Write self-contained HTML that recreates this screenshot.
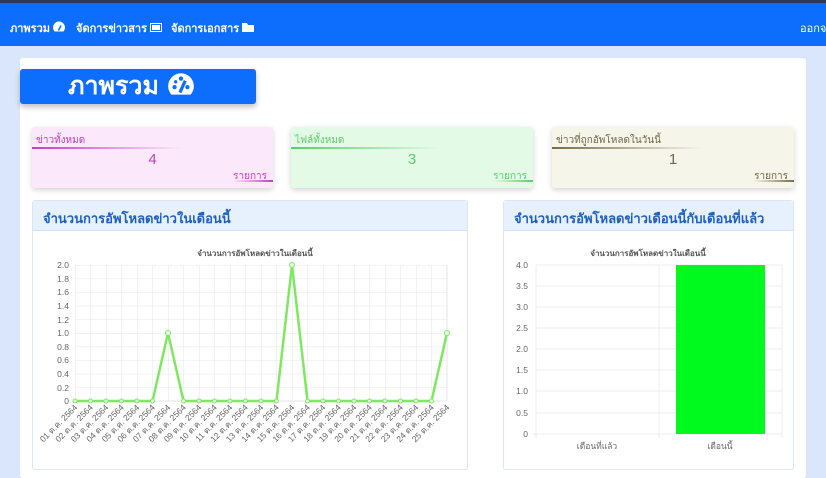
<!DOCTYPE html>
<html><head><meta charset="utf-8"><style>
*{margin:0;padding:0;box-sizing:border-box}
body{width:826px;height:465px;overflow:hidden;background:#dae6fb;font-family:"Liberation Sans","Noto Sans CJK SC",sans-serif;position:relative}
.a{position:absolute}
.nav{left:0;top:0;width:826px;height:46px;background:#0d6efd;border-top:3px solid #2b3a55}
.nav span{position:absolute;top:16px;color:#fff;font-size:11px;font-weight:bold;white-space:nowrap}
.card{border-radius:3px;box-shadow:0 2px 6px rgba(0,0,0,.18)}
.lbl{font-size:10px;position:absolute;left:4px;top:6px}
.ul{position:absolute;left:0;top:20px;height:2px;width:150px}
.num{position:absolute;width:100%;text-align:center;top:24px;font-size:15px}
.unit{position:absolute;right:6px;top:42px;font-size:10px}
.bl{position:absolute;right:0;top:53px;height:2px;width:40px}
.ph{background:#e7f0fd;border-bottom:1px solid #d6e2f3;border-radius:3px 3px 0 0;height:30px;color:#1f5fbf;font-size:13px;font-weight:bold;padding:7px 10px;white-space:nowrap}
</style></head><body>
<div class="a nav">
<span style="left:10px">ภาพรวม <svg width="12" height="11" viewBox="4 0 24 22"><path d="M7 21A12 12 0 1 1 25 21Z" fill="#fff"/><path d="M15 19L20 9" stroke="#0d6efd" stroke-width="3"/></svg></span>
<span style="left:76px">จัดการข่าวสาร <svg width="12" height="9"><rect x="0.5" y="0.5" width="11" height="8" fill="none" stroke="#fff"/><rect x="2" y="2" width="8" height="5" fill="#fff"/></svg></span>
<span style="left:171px">จัดการเอกสาร <svg width="13" height="9"><path d="M0 0H5L6 2H12V9H0Z" fill="#fff"/></svg></span>
<span style="left:800px;font-weight:normal">ออกจ</span>
</div>
<div class="a" style="left:20px;top:58px;width:786px;height:420px;background:#fff;border-radius:3px"></div>
<div class="a" style="left:20px;top:69px;width:236px;height:35px;background:#0d6efd;border-radius:3px;box-shadow:0 3px 6px rgba(0,0,0,.25);color:#fff;font-size:25px;font-weight:bold;padding-left:48px;line-height:35px">ภาพรวม <svg width="30" height="26" viewBox="2 0 28 24" style="vertical-align:-4px"><path d="M7 21A12 12 0 1 1 25 21Z" fill="#fff"/><circle cx="10" cy="14" r="2" fill="#0d6efd"/><circle cx="16" cy="6" r="2" fill="#0d6efd"/><circle cx="22" cy="14" r="2" fill="#0d6efd"/><circle cx="11" cy="9" r="1.6" fill="#0d6efd"/><path d="M15 19L20 8" stroke="#0d6efd" stroke-width="3"/></svg></div>

<div class="a card" style="left:32px;top:127px;width:241px;height:61px;background:#fce8fb;color:#c040c0">
<div class="lbl">ข่าวทั้งหมด</div><div class="ul" style="background:linear-gradient(90deg,#c040c0,transparent)"></div>
<div class="num">4</div><div class="unit">รายการ</div><div class="bl" style="background:linear-gradient(90deg,transparent,#c040c0)"></div></div>
<div class="a card" style="left:291px;top:127px;width:242px;height:61px;background:#e3fbe6;color:#5ccb6a">
<div class="lbl">ไฟล์ทั้งหมด</div><div class="ul" style="background:linear-gradient(90deg,#5ccb6a,transparent)"></div>
<div class="num">3</div><div class="unit">รายการ</div><div class="bl" style="background:linear-gradient(90deg,transparent,#5ccb6a)"></div></div>
<div class="a card" style="left:552px;top:127px;width:242px;height:61px;background:#f6f5ea;color:#6e6648">
<div class="lbl">ข่าวที่ถูกอัพโหลดในวันนี้</div><div class="ul" style="background:linear-gradient(90deg,#7a6a48,transparent)"></div>
<div class="num">1</div><div class="unit">รายการ</div><div class="bl" style="background:linear-gradient(90deg,transparent,#7a6a48)"></div></div>

<div class="a" style="left:32px;top:200px;width:436px;height:270px;border:1px solid #dde5ef;border-radius:3px"><div class="ph">จำนวนการอัพโหลดข่าวในเดือนนี้</div></div>
<div class="a" style="left:503px;top:200px;width:291px;height:270px;border:1px solid #dde5ef;border-radius:3px"><div class="ph">จำนวนการอัพโหลดข่าวเดือนนี้กับเดือนที่แล้ว</div></div>

<svg class="a" style="left:0;top:0" width="826" height="465" font-family="Liberation Sans, Noto Sans CJK SC, sans-serif">
<defs>
<pattern id="g" x="75" y="265" width="15.5" height="13.6" patternUnits="userSpaceOnUse"><path d="M0 0V13.6M0 0H15.5" stroke="#e6e6e6" stroke-width="1" fill="none"/></pattern>
</defs>
<text x="255" y="256" font-size="8" text-anchor="middle" fill="#555" font-weight="bold">จำนวนการอัพโหลดข่าวในเดือนนี้</text>
<rect x="75" y="265" width="372" height="136" fill="url(#g)"/>
<path d="M447 265V401M75 401H447" stroke="#e6e6e6"/>
<g font-size="8.5" fill="#666" text-anchor="end">
<text x="69" y="268">2.0</text><text x="69" y="282">1.8</text><text x="69" y="295">1.6</text><text x="69" y="309">1.4</text><text x="69" y="323">1.2</text><text x="69" y="336">1.0</text><text x="69" y="350">0.8</text><text x="69" y="363">0.6</text><text x="69" y="377">0.4</text><text x="69" y="391">0.2</text><text x="69" y="404">0</text>
</g>
<polyline fill="none" stroke="#7fe860" stroke-width="2.5" points="75,401 90.5,401 106,401 121.5,401 137,401 152.5,401 168,333 183.5,401 199,401 214.5,401 230,401 245.5,401 261,401 276.5,401 292,265 307.5,401 323,401 338.5,401 354,401 369.5,401 385,401 400.5,401 416,401 431.5,401 447,333"/>
<g fill="#e8ffe0" stroke="#7fe860" stroke-width="1">
<circle cx="75" cy="401" r="2"/><circle cx="90.5" cy="401" r="2"/><circle cx="106" cy="401" r="2"/><circle cx="121.5" cy="401" r="2"/><circle cx="137" cy="401" r="2"/><circle cx="152.5" cy="401" r="2"/><circle cx="168" cy="333" r="2.5"/><circle cx="183.5" cy="401" r="2"/><circle cx="199" cy="401" r="2"/><circle cx="214.5" cy="401" r="2"/><circle cx="230" cy="401" r="2"/><circle cx="245.5" cy="401" r="2"/><circle cx="261" cy="401" r="2"/><circle cx="276.5" cy="401" r="2"/><circle cx="292" cy="265" r="2.5"/><circle cx="307.5" cy="401" r="2"/><circle cx="323" cy="401" r="2"/><circle cx="338.5" cy="401" r="2"/><circle cx="354" cy="401" r="2"/><circle cx="369.5" cy="401" r="2"/><circle cx="385" cy="401" r="2"/><circle cx="400.5" cy="401" r="2"/><circle cx="416" cy="401" r="2"/><circle cx="431.5" cy="401" r="2"/><circle cx="447" cy="333" r="2.5"/>
</g>
<g font-size="8.5" fill="#666" text-anchor="end">
<text transform="translate(78,408) rotate(-45)">01 ต.ค. 2564</text><text transform="translate(93.5,408) rotate(-45)">02 ต.ค. 2564</text><text transform="translate(109,408) rotate(-45)">03 ต.ค. 2564</text><text transform="translate(124.5,408) rotate(-45)">04 ต.ค. 2564</text><text transform="translate(140,408) rotate(-45)">05 ต.ค. 2564</text><text transform="translate(155.5,408) rotate(-45)">06 ต.ค. 2564</text><text transform="translate(171,408) rotate(-45)">07 ต.ค. 2564</text><text transform="translate(186.5,408) rotate(-45)">08 ต.ค. 2564</text><text transform="translate(202,408) rotate(-45)">09 ต.ค. 2564</text><text transform="translate(217.5,408) rotate(-45)">10 ต.ค. 2564</text><text transform="translate(233,408) rotate(-45)">11 ต.ค. 2564</text><text transform="translate(248.5,408) rotate(-45)">12 ต.ค. 2564</text><text transform="translate(264,408) rotate(-45)">13 ต.ค. 2564</text><text transform="translate(279.5,408) rotate(-45)">14 ต.ค. 2564</text><text transform="translate(295,408) rotate(-45)">15 ต.ค. 2564</text><text transform="translate(310.5,408) rotate(-45)">16 ต.ค. 2564</text><text transform="translate(326,408) rotate(-45)">17 ต.ค. 2564</text><text transform="translate(341.5,408) rotate(-45)">18 ต.ค. 2564</text><text transform="translate(357,408) rotate(-45)">19 ต.ค. 2564</text><text transform="translate(372.5,408) rotate(-45)">20 ต.ค. 2564</text><text transform="translate(388,408) rotate(-45)">21 ต.ค. 2564</text><text transform="translate(403.5,408) rotate(-45)">22 ต.ค. 2564</text><text transform="translate(419,408) rotate(-45)">23 ต.ค. 2564</text><text transform="translate(434.5,408) rotate(-45)">24 ต.ค. 2564</text><text transform="translate(450,408) rotate(-45)">25 ต.ค. 2564</text>
</g>

<text x="648" y="256" font-size="8" text-anchor="middle" fill="#555" font-weight="bold">จำนวนการอัพโหลดข่าวในเดือนนี้</text>
<g stroke="#ececec">
<path d="M536 265H782M536 286H782M536 307H782M536 328H782M536 349H782M536 370H782M536 391H782M536 413H782"/>
<path d="M536 265V438M659 265V438M782 265V438M532 434H782"/>
</g>
<rect x="676" y="265" width="89" height="169" fill="#00fa1e"/>
<g font-size="8.5" fill="#666" text-anchor="end">
<text x="528" y="268">4.0</text><text x="528" y="289">3.5</text><text x="528" y="310">3.0</text><text x="528" y="331">2.5</text><text x="528" y="352">2.0</text><text x="528" y="373">1.5</text><text x="528" y="394">1.0</text><text x="528" y="416">0.5</text><text x="528" y="437">0</text>
</g>
<g font-size="8.5" fill="#666" text-anchor="middle"><text x="597" y="449">เดือนที่แล้ว</text><text x="720" y="449">เดือนนี้</text></g>
</svg>
</body></html>
